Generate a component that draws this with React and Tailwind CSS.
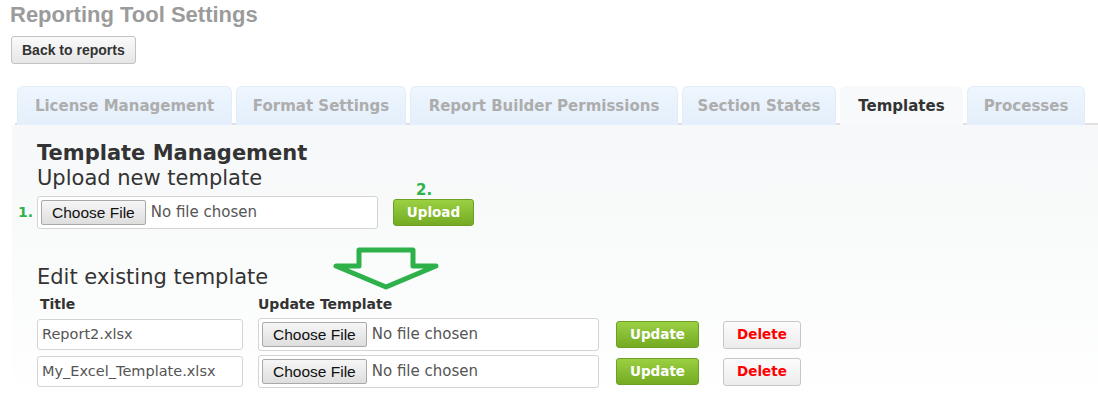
const tabs = [
  { label: 'License Management', w: 'w-[215px]' },
  { label: 'Format Settings', w: 'w-[170px]' },
  { label: 'Report Builder Permissions', w: 'w-[268px]' },
  { label: 'Section States', w: 'w-[154px]' },
  { label: 'Templates', w: 'w-[123px]', active: true },
  { label: 'Processes', w: 'w-[118px]' }
];

const rows = ['Report2.xlsx', 'My_Excel_Template.xlsx'];

const FileBox = ({ width }) => (
  <div className={`${width} h-[33px] bg-white border border-[#d4d4d4] rounded-[3px] flex items-center pl-[3px]`}>
    <button className="h-[25px] px-[10px] bg-gradient-to-b from-[#f6f6f6] to-[#dedede] border border-[#a9a9a9] rounded-[2px] text-[15.5px] leading-[20px] text-[#111] font-['Liberation_Sans',sans-serif]">
      Choose File
    </button>
    <span className="ml-[5px] text-[15px] text-[#555] font-['DejaVu_Sans',sans-serif]">No file chosen</span>
  </div>
);

const GreenButton = ({ children, className = '' }) => (
  <button className={`h-[27px] bg-gradient-to-b from-[#9bd042] to-[#74ab22] border border-[#6c9f24] rounded-[3px] text-white text-[13.5px] font-bold font-['DejaVu_Sans',sans-serif] ${className}`}>
    {children}
  </button>
);

export default function App() {
  return (
    <div className="w-[1098px] h-[402px] bg-white overflow-hidden relative font-['DejaVu_Sans',sans-serif]">
      <h1 className="pl-[10px] pt-[2px] text-[22px] leading-[26px] font-bold text-[#9b9b9b] font-['Liberation_Sans',sans-serif]">
        Reporting Tool Settings
      </h1>
      <button className="ml-[11px] mt-[8px] h-[28px] px-[10px] bg-gradient-to-b from-[#fafafa] to-[#e6e6e6] border border-[#c2c2c2] rounded-[3px] text-[14px] font-bold text-[#333] font-['Liberation_Sans',sans-serif]">
        Back to reports
      </button>

      <div className="mt-[22px] ml-[15px] pl-[2px] flex gap-[4px] border-b-2 border-[#e0e0e0] h-[39px]">
        {tabs.map((t) => (
          <div
            key={t.label}
            className={`${t.w} h-[39px] rounded-t-[6px] flex items-center justify-center text-[15px] font-bold ${
              t.active
                ? 'bg-[#f7f9fa] text-[#333] h-[41px] -mb-[2px]'
                : 'bg-gradient-to-b from-[#eef6fe] to-[#e4effb] border border-[#e2edf7] border-b-0 text-[#adadad]'
            }`}
          >
            {t.label}
          </div>
        ))}
      </div>

      <div className="ml-[12px] h-[280px] bg-gradient-to-b from-[#f6f8f9] via-[#fafbfb] to-white pt-[16px] relative">
        <h2 className="pl-[25px] text-[21px] leading-[24px] font-bold text-[#333]">Template Management</h2>
        <h3 className="pl-[25px] text-[21px] leading-[26px] text-[#333]">Upload new template</h3>

        <div className="mt-[5px] pl-[6px] flex items-center">
          <span className="w-[19px] text-[14px] font-bold text-[#2db34a]">1.</span>
          <FileBox width="w-[341px]" />
          <div className="ml-[15px] relative">
            <span className="absolute left-[23px] -top-[20px] text-[15px] font-bold text-[#2db34a]">2.</span>
            <GreenButton className="w-[81px]">Upload</GreenButton>
          </div>
        </div>

        <svg className="absolute left-[318px] top-[121px]" width="112" height="46" viewBox="0 0 112 46">
          <path
            d="M29 4 H83 V20 H106 L56 41 L6 20 H29 Z"
            fill="none"
            stroke="#2eb14a"
            strokeWidth="5"
            strokeLinejoin="round"
          />
        </svg>

        <h3 className="mt-[35px] pl-[25px] text-[21px] leading-[26px] text-[#333]">Edit existing template</h3>
        <div className="mt-[4px] pl-[28px] flex text-[14px] font-bold text-[#333] leading-[20px]">
          <span className="w-[218px]">Title</span>
          <span>Update Template</span>
        </div>

        <div className="mt-[4px] pl-[25px] flex flex-col gap-[4px]">
          {rows.map((r) => (
            <div key={r} className="flex items-center">
              <div className="w-[206px] h-[31px] bg-white border border-[#d4d4d4] rounded-[3px] flex items-center pl-[4px] text-[14.5px] text-[#555]">
                {r}
              </div>
              <div className="ml-[15px]">
                <FileBox width="w-[341px]" />
              </div>
              <GreenButton className="ml-[17px] w-[83px]">Update</GreenButton>
              <button className="ml-[24px] w-[78px] h-[28px] bg-gradient-to-b from-[#fcfcfc] to-[#ececec] border border-[#c6c6c6] rounded-[3px] text-[13.5px] font-bold text-[#f00]">
                Delete
              </button>
            </div>
          ))}
        </div>
      </div>
    </div>
  );
}
